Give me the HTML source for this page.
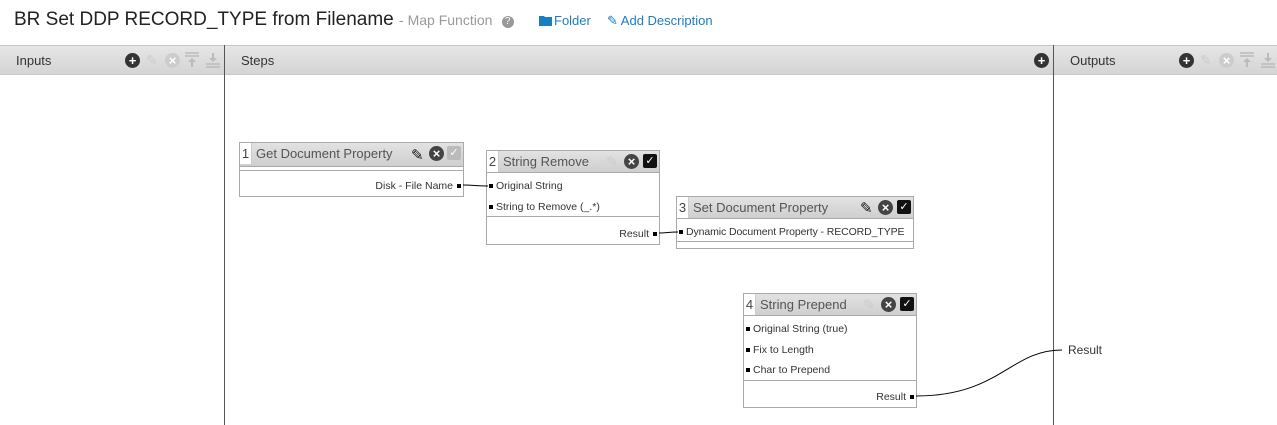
<!DOCTYPE html>
<html><head><meta charset="utf-8"><style>
*{box-sizing:border-box;margin:0;padding:0}
body{width:1277px;height:425px;overflow:hidden;background:#fff;font-family:"Liberation Sans",sans-serif;position:relative;color:#333}
.a{position:absolute}
.title{left:14px;top:9px;font-size:19px;color:#222;white-space:nowrap}
.title small{font-size:14px;color:#999}
.link{color:#1a7fc1;font-size:13px;top:13px}
.bar{left:0;top:45px;width:1277px;height:30px;background:linear-gradient(#e6e6e6,#d4d4d4);border-top:1px solid #c8c8c8;border-bottom:1px solid #c8c8c8}
.ph{font-size:13px;color:#333;top:53px}
.vl{width:1px;background:#555;top:45px;height:380px}
.circ{width:15px;height:15px;border-radius:50%;color:#fff;font-size:13px;line-height:15px;text-align:center;font-weight:bold}
.dk{background:#333}.lt{background:#ccc}
.box{border:1px solid #aaa;background:#fff}
.hd{position:absolute;left:0;top:0;right:0;height:22px;background:linear-gradient(#e2e2e2,#cfcfcf);border-bottom:1px solid #aaa;font-size:13px;line-height:22px;color:#555}
.hd .n{display:inline-block;width:12px;background:#fff;text-align:center;height:21px;border-right:1px solid #ccc;margin-right:4px;color:#444}
.p{position:absolute;font-size:10.5px;color:#333;white-space:nowrap}
.sq{position:absolute;width:4px;height:4px;background:#000}
.chk{width:14px;height:14px;border-radius:2px;background:#111;color:#fff;font-size:11px;line-height:14px;text-align:center}
.chk.g{background:#bbb}
</style></head><body>
<div class="a title">BR Set DDP RECORD_TYPE from Filename <small>- Map Function</small> <span style="display:inline-block;width:12px;height:12px;border-radius:50%;background:#999;color:#fff;font-size:10px;line-height:12px;text-align:center;vertical-align:1px;margin-left:4px">?</span></div>
<div class="a link" style="left:539px"><svg width="13" height="11" style="vertical-align:-1px;margin-right:2px"><path d="M0 1h5l1 1h7v9H0z" fill="#1a7fc1"/></svg>Folder</div>
<div class="a link" style="left:607px">✎ Add Description</div>
<div class="a bar"></div>
<div class="a vl" style="left:224px"></div>
<div class="a vl" style="left:1053px"></div>
<div class="a ph" style="left:16px">Inputs</div>
<div class="a ph" style="left:241px">Steps</div>
<div class="a ph" style="left:1070px">Outputs</div>
<div class="a circ dk" style="left:125px;top:53px">+</div>
<div class="a" style="left:146px;top:52px;color:#ccc;font-size:14px">✎</div>
<div class="a circ lt" style="left:165px;top:53px">×</div>
<svg class="a" style="left:184px;top:52px" width="16" height="16"><path d="M1 1h14M1 4h14" stroke="#bbb" stroke-width="1.5"/><path d="M8 6l-4 4h3v5h2v-5h3z" fill="#bbb"/></svg>
<svg class="a" style="left:205px;top:52px" width="16" height="16"><path d="M7 1h2v5h3l-4 4-4-4h3z" fill="#bbb"/><path d="M1 12h14M1 15h14" stroke="#bbb" stroke-width="1.5"/></svg>
<div class="a circ dk" style="left:1034px;top:53px">+</div>
<div class="a circ dk" style="left:1179px;top:53px">+</div>
<div class="a" style="left:1200px;top:52px;color:#ccc;font-size:14px">✎</div>
<div class="a circ lt" style="left:1219px;top:53px">×</div>
<svg class="a" style="left:1239px;top:52px" width="16" height="16"><path d="M1 1h14M1 4h14" stroke="#bbb" stroke-width="1.5"/><path d="M8 6l-4 4h3v5h2v-5h3z" fill="#bbb"/></svg>
<svg class="a" style="left:1260px;top:52px" width="16" height="16"><path d="M7 1h2v5h3l-4 4-4-4h3z" fill="#bbb"/><path d="M1 12h14M1 15h14" stroke="#bbb" stroke-width="1.5"/></svg>

<!-- box 1 -->
<div class="a box" style="left:239px;top:142px;width:225px;height:55px">
<div class="hd" style="height:24px"><span class="n">1</span>Get Document Property</div>
<div style="position:absolute;left:0;right:0;top:27px;border-top:1px solid #aaa"></div>
<div class="p" style="right:10px;top:37px">Disk - File Name</div>
<div class="sq" style="right:2px;top:41px"></div>
<div class="a" style="left:171px;top:3px;font-size:15px;color:#111">✎</div>
<div class="a circ" style="left:189px;top:3px;background:#444">×</div>
<div class="a chk g" style="left:207px;top:3px">✓</div>
</div>
<!-- box 2 -->
<div class="a box" style="left:486px;top:150px;width:174px;height:95px">
<div class="hd"><span class="n">2</span>String Remove</div>
<div class="a" style="left:119px;top:2px;font-size:15px;color:#ccc">✎</div>
<div class="a circ" style="left:137px;top:3px;background:#444">×</div>
<div class="a chk" style="left:156px;top:3px">✓</div>
<div class="sq" style="left:2px;top:33px"></div><div class="p" style="left:9px;top:29px">Original String</div>
<div class="sq" style="left:2px;top:54px"></div><div class="p" style="left:9px;top:50px">String to Remove (_.*)</div>
<div style="position:absolute;left:0;right:0;top:65px;border-top:1px solid #aaa"></div>
<div class="p" style="right:10px;top:77px">Result</div><div class="sq" style="right:2px;top:81px"></div>
</div>
<!-- box 3 -->
<div class="a box" style="left:676px;top:196px;width:238px;height:53px">
<div class="hd"><span class="n">3</span>Set Document Property</div>
<div class="a" style="left:183px;top:2px;font-size:15px;color:#111">✎</div>
<div class="a circ" style="left:201px;top:3px;background:#444">×</div>
<div class="a chk" style="left:220px;top:3px">✓</div>
<div class="sq" style="left:2px;top:33px"></div><div class="p" style="left:9px;top:29px;letter-spacing:-0.1px">Dynamic Document Property - RECORD_TYPE</div>
<div style="position:absolute;left:0;right:0;top:44px;border-top:1px solid #aaa"></div>
</div>
<!-- box 4 -->
<div class="a box" style="left:743px;top:293px;width:174px;height:115px">
<div class="hd"><span class="n">4</span>String Prepend</div>
<div class="a" style="left:119px;top:2px;font-size:15px;color:#ccc">✎</div>
<div class="a circ" style="left:137px;top:3px;background:#444">×</div>
<div class="a chk" style="left:156px;top:3px">✓</div>
<div class="sq" style="left:2px;top:33px"></div><div class="p" style="left:9px;top:29px">Original String (true)</div>
<div class="sq" style="left:2px;top:54px"></div><div class="p" style="left:9px;top:50px">Fix to Length</div>
<div class="sq" style="left:2px;top:74px"></div><div class="p" style="left:9px;top:70px">Char to Prepend</div>
<div style="position:absolute;left:0;right:0;top:86px;border-top:1px solid #aaa"></div>
<div class="p" style="right:10px;top:97px">Result</div><div class="sq" style="right:2px;top:101px"></div>
</div>
<svg class="a" style="left:0;top:0" width="1277" height="425">
<path d="M463 185 C475 185,475 186,488 186" stroke="#000" fill="none"/>
<path d="M659 233 C668 233,668 232,678 232" stroke="#000" fill="none"/>
<path d="M916 396 C1000 396,1010 350,1062 350" stroke="#000" fill="none"/>
</svg>
<div class="a p" style="left:1068px;top:343px;font-size:12px">Result</div>
</body></html>
